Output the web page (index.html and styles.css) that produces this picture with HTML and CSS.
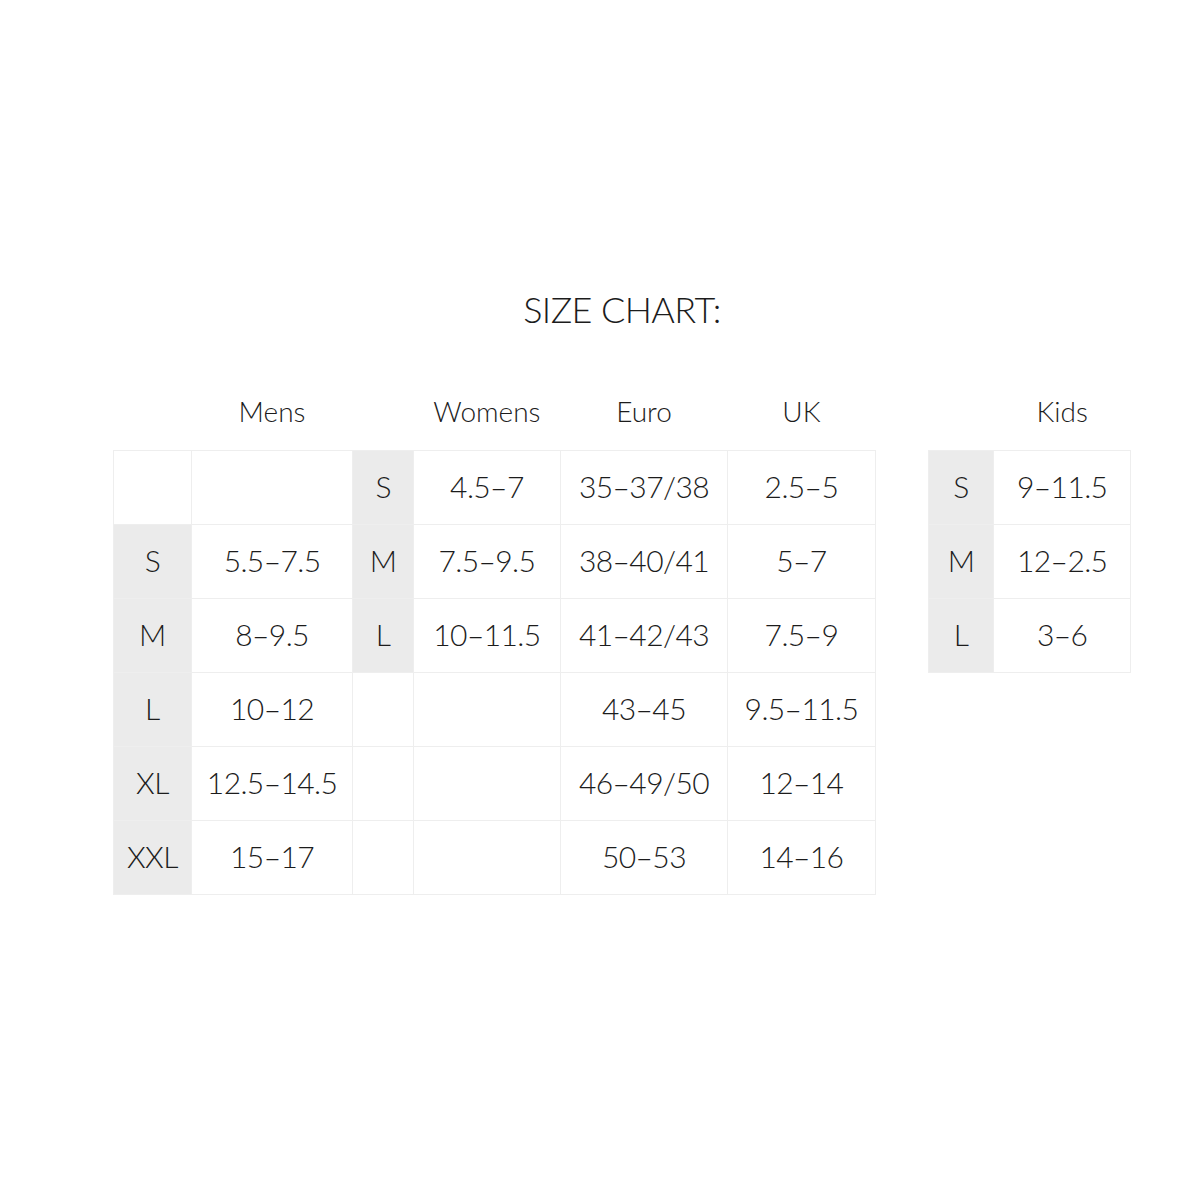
FILE: index.html
```html
<!DOCTYPE html>
<html>
<head>
<meta charset="utf-8">
<link rel="stylesheet" href="styles.css">
</head>
<body>
<div class="page">
  <h1 class="title">SIZE CHART:</h1>
  <div class="charts">
    <table class="chart main">
      <colgroup>
        <col class="c-size1"><col class="c-mens"><col class="c-size2"><col class="c-womens"><col class="c-euro"><col class="c-uk">
      </colgroup>
      <thead>
        <tr><th></th><th>Mens</th><th></th><th>Womens</th><th>Euro</th><th>UK</th></tr>
      </thead>
      <tbody>
        <tr><td></td><td></td><td class="g">S</td><td>4.5–7</td><td>35–37/38</td><td>2.5–5</td></tr>
        <tr><td class="g">S</td><td>5.5–7.5</td><td class="g">M</td><td>7.5–9.5</td><td>38–40/41</td><td>5–7</td></tr>
        <tr><td class="g">M</td><td>8–9.5</td><td class="g">L</td><td>10–11.5</td><td>41–42/43</td><td>7.5–9</td></tr>
        <tr><td class="g">L</td><td>10–12</td><td></td><td></td><td>43–45</td><td>9.5–11.5</td></tr>
        <tr><td class="g">XL</td><td>12.5–14.5</td><td></td><td></td><td>46–49/50</td><td>12–14</td></tr>
        <tr><td class="g">XXL</td><td>15–17</td><td></td><td></td><td>50–53</td><td>14–16</td></tr>
      </tbody>
    </table>
    <table class="chart kids">
      <colgroup>
        <col class="c-ksize"><col class="c-kids">
      </colgroup>
      <thead>
        <tr><th></th><th>Kids</th></tr>
      </thead>
      <tbody>
        <tr><td class="g">S</td><td>9–11.5</td></tr>
        <tr><td class="g">M</td><td>12–2.5</td></tr>
        <tr><td class="g">L</td><td>3–6</td></tr>
      </tbody>
    </table>
  </div>
</div>
</body>
</html>
```
FILE: styles.css
```css
html, body {
  margin: 0;
  padding: 0;
  background: #ffffff;
}
body {
  font-family: Lato, "Liberation Sans", sans-serif;
  font-weight: 300;
  color: #1c1c1c;
}
.page {
  width: 1018px;
  margin-left: 113px;
  padding-top: 284px;
}
.title {
  margin: 0;
  text-align: center;
  font-weight: 300;
  font-size: 36px;
  line-height: 50px;
  letter-spacing: -0.6px;
}
.charts {
  display: flex;
  gap: 52px;
  align-items: flex-start;
  margin-top: 50px;
}
.chart {
  border-collapse: collapse;
  table-layout: fixed;
}
.chart th {
  font-weight: 300;
  font-size: 28px;
  height: 44px;
  padding: 0 0 22px 0;
  vertical-align: bottom;
  line-height: 34px;
  text-align: center;
}
.chart td {
  height: 70px;
  padding: 0 0 3px 0;
  border: 1px solid #eeeeee;
  text-align: center;
  vertical-align: middle;
  font-size: 30px;
  letter-spacing: -0.6px;
}
.chart td.g {
  background: #ebebeb;
}
.c-size1 { width: 78px; }
.c-mens { width: 162px; }
.c-size2 { width: 61px; }
.c-womens { width: 147px; }
.c-euro { width: 168px; }
.c-uk { width: 148px; }
.c-ksize { width: 66px; }
.c-kids { width: 137px; }
```
